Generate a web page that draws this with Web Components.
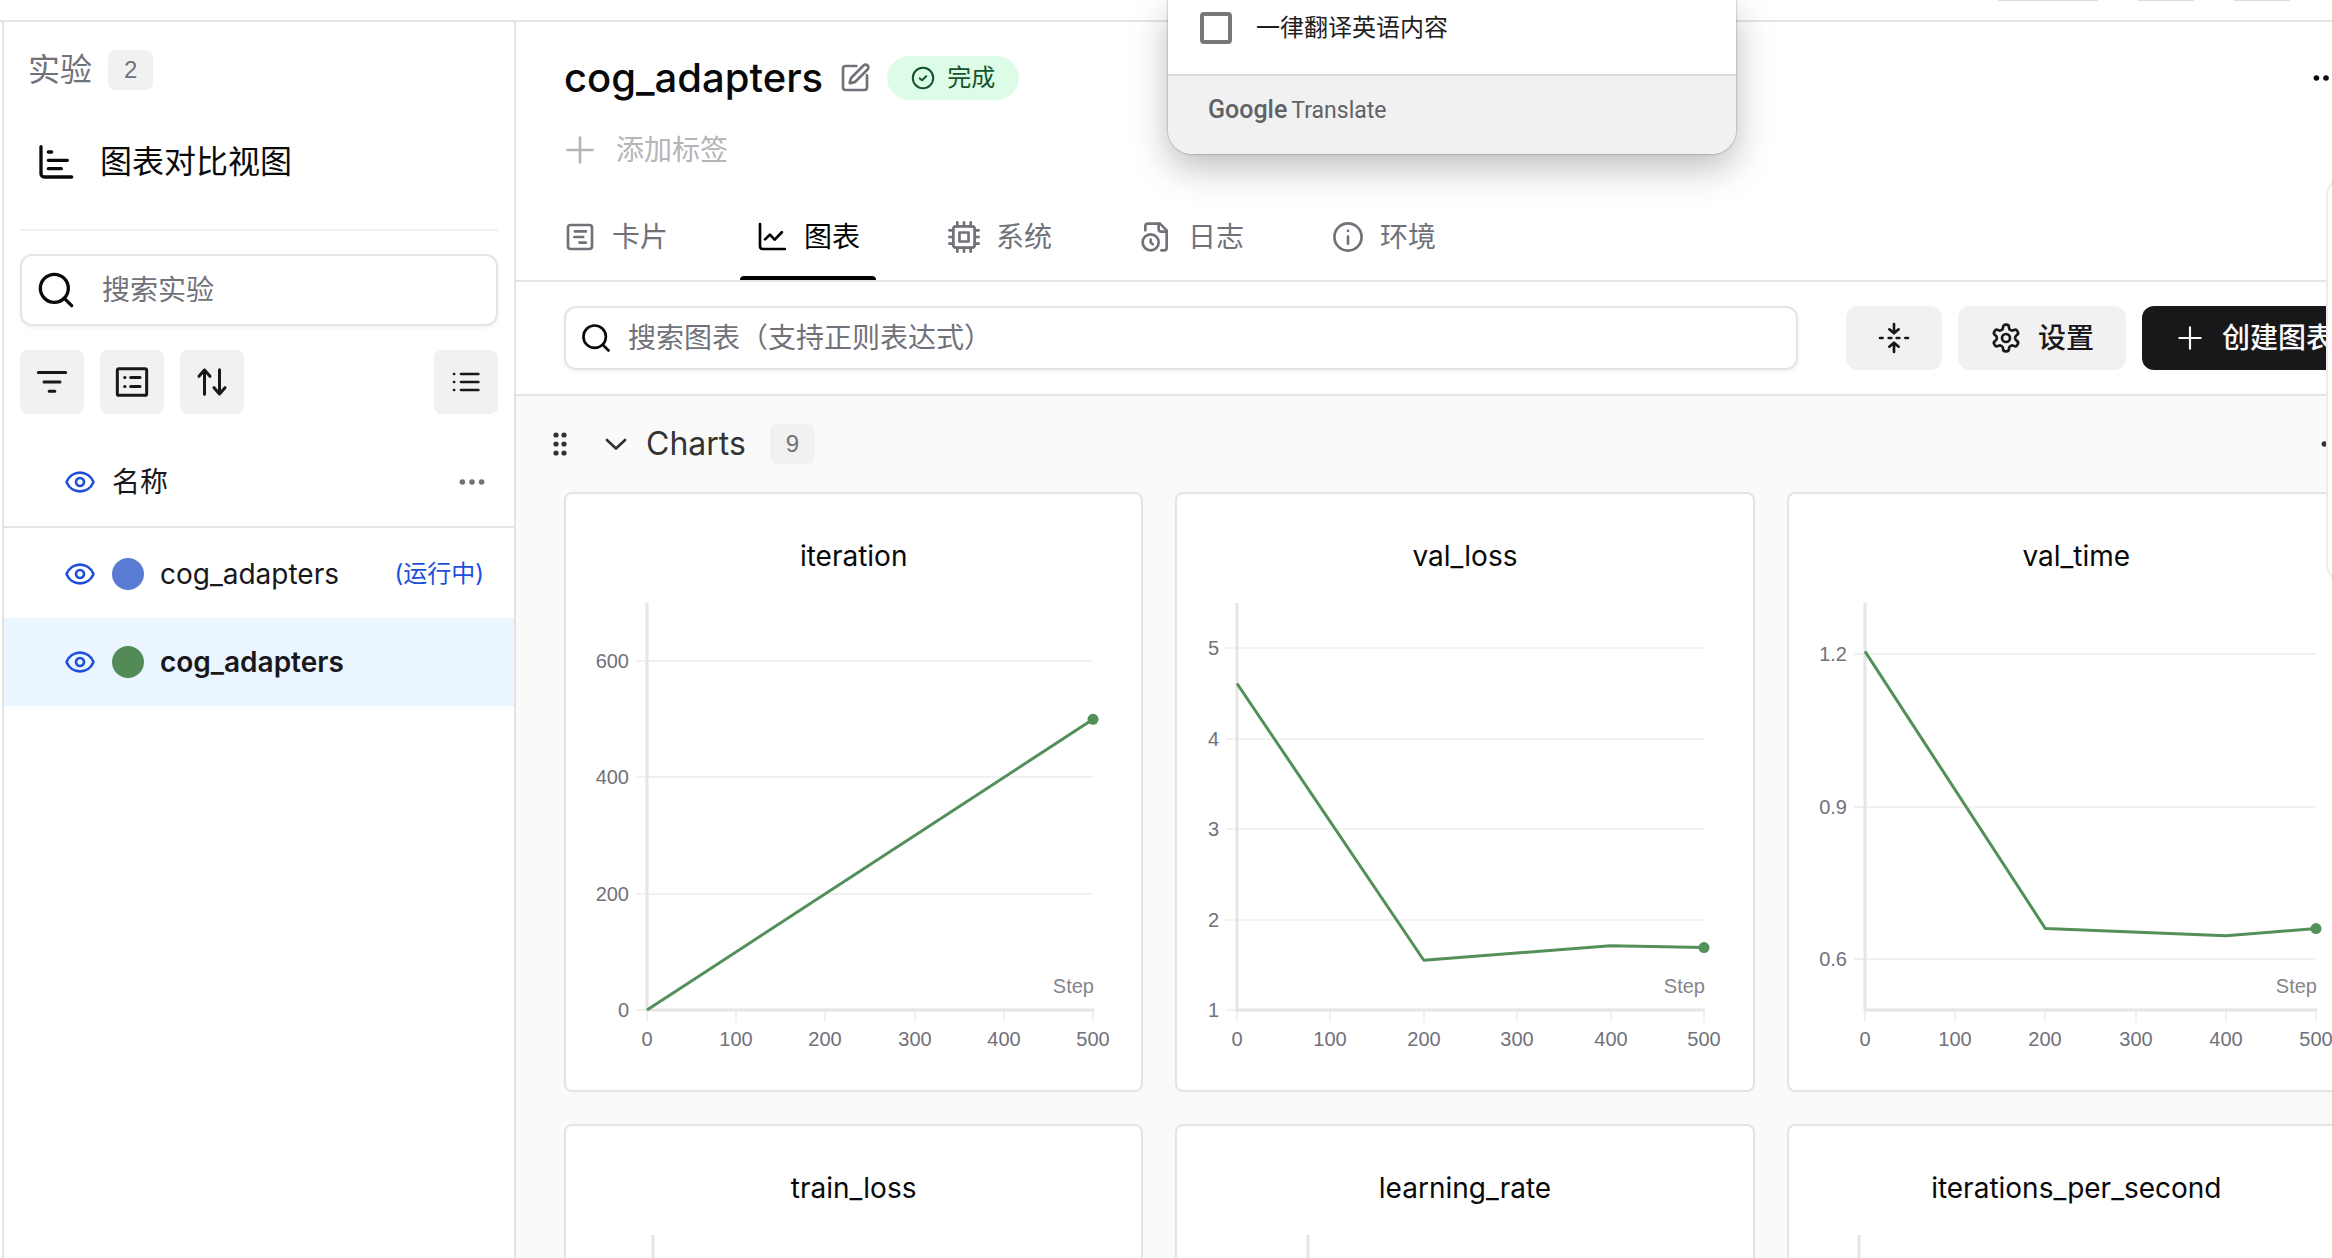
<!DOCTYPE html>
<html lang="zh-CN">
<head>
<meta charset="utf-8">
<meta name="viewport" content="width=device-width, initial-scale=1">
<title>cog_adapters</title>
<style>
    html, body { height: 100%; margin: 0; overflow: hidden; }
    body {
        background: #fff;
        color: #09090b;
        font: 28px/40px Inter, "Noto Sans CJK SC", sans-serif;
        --line: #e4e4e4;
        --soft: #f1f1f1;
        --muted: #71717a;
        --digits: "Liberation Sans", "Noto Sans CJK SC", sans-serif;
    }
</style>
</head>
<body>
<exp-app>
    <exp-sidebar slot="sidebar">
        <run-row color="#5a7bd3" state="(运行中)">cog_adapters</run-row>
        <run-row color="#528b58" selected>cog_adapters</run-row>
    </exp-sidebar>
    <run-header name="cog_adapters">
        <tab-item icon="card">卡片</tab-item>
        <tab-item icon="chart" selected>图表</tab-item>
        <tab-item icon="cpu">系统</tab-item>
        <tab-item icon="log">日志</tab-item>
        <tab-item icon="info">环境</tab-item>
    </run-header>
    <chart-toolbar></chart-toolbar>
    <chart-section name="Charts" count="9">
        <line-chart name="iteration" inset="81" min="0" max="700" ticks="0,200,400,600" points="0,0 500,500"></line-chart>
        <line-chart name="val_loss" inset="60" min="1" max="5.5" ticks="1,2,3,4,5" points="0,4.61 200,1.55 400,1.71 500,1.69"></line-chart>
        <line-chart name="val_time" inset="76" min="0.5" max="1.3" ticks="0.6,0.9,1.2" points="0,1.205 200,0.66 400,0.646 500,0.66"></line-chart>
        <line-chart name="train_loss" inset="87"></line-chart>
        <line-chart name="learning_rate" inset="131"></line-chart>
        <line-chart name="iterations_per_second" inset="70"></line-chart>
    </chart-section>
    <translate-popup slot="overlay"></translate-popup>
    <side-drawer slot="overlay"></side-drawer>
</exp-app>

<script>
// 24x24 stroke icons, the dots are zero-length round strokes or filled circles
const ICONS = {
    search: '<circle cx="11" cy="11" r="8.4"/><path d="m17 17 4.4 4.4"/>',
    compare: '<path d="M3 2.8V19a2 2 0 0 0 2 2h16.4M7.4 6h2M7.4 11h11.4M7.4 16h7.8"/>',
    filter: '<path d="M3.8 6.3h16.4M7.2 12h9.6M10.3 17.6h3.4"/>',
    columns: '<rect x="3.2" y="4" width="17.6" height="16" rx="1"/><path d="M7.6 9.3h.2M7.6 14.7h.2M11.2 9.3h5.6M11.2 14.7h5.6"/>',
    sort: '<path d="M7.5 19.4V4.8M4.2 8.6l3.3-3.8 3.3 3.8M16.5 4.6v14.6M13.2 15.4l3.3 3.8 3.3-3.8"/>',
    list: '<path d="M4.8 7.2h.1M4.8 12h.1M4.8 16.8h.1M9 7.2h10.4M9 12h10.4M9 16.8h10.4"/>',
    eye: '<path d="M2.06 12.35a1 1 0 0 1 0-.7 10.75 10.75 0 0 1 19.88 0 1 1 0 0 1 0 .7 10.75 10.75 0 0 1-19.88 0z"/><circle cx="12" cy="12" r="3"/>',
    more: '<g fill="currentColor" stroke="none"><circle cx="4.8" cy="12" r="2.1"/><circle cx="12" cy="12" r="2.1"/><circle cx="19.2" cy="12" r="2.1"/></g>',
    edit: '<path d="M13 3H5a2 2 0 0 0-2 2v14a2 2 0 0 0 2 2h14a2 2 0 0 0 2-2v-9"/><path d="M18.4 2.6a2.1 2.1 0 0 1 3 3l-9 9a2 2 0 0 1-.9.5l-2.9.9a.5.5 0 0 1-.6-.6l.9-2.9a2 2 0 0 1 .5-.9z"/>',
    check: '<circle cx="12" cy="12" r="10.2"/><path d="m8.8 12.4 2.3 1.9 4.1-4"/>',
    plus: '<path d="M12 2.6v18.8M2.6 12h18.8"/>',
    add: '<path d="M12 4v16M4 12h16"/>',
    card: '<rect x="3" y="3" width="18" height="18" rx="2"/><path d="M8.2 7.8h8.2M7.8 12h6.6M11.6 16.2h4.8"/>',
    chart: '<path d="M3 2.4V19a2 2 0 0 0 2 2h16.6M6.8 13.8l3.6-3.6 3.6 3.8 5.4-5.6"/>',
    cpu: '<rect x="4" y="4" width="16" height="16" rx="2"/><rect x="8.6" y="8.6" width="6.8" height="6.8"/><path d="M7 1v3M12 1v3M17 1v3M7 20v3M12 20v3M17 20v3M1 7h3M1 12h3M1 17h3M20 7h3M20 12h3M20 17h3"/>',
    log: '<path d="M16 22h2a2 2 0 0 0 2-2V7l-5-5H6a2 2 0 0 0-2 2v3"/><path d="M14 2v4a2 2 0 0 0 2 2h4"/><circle cx="8" cy="16" r="6"/><path d="M9.5 17.5 8 16.2V14"/>',
    info: '<circle cx="12" cy="12" r="10.2"/><path d="M12 17v-5.4M12 7.4v.1"/>',
    fold: '<path d="M12 22.5V16M12 8V1.5M3.5 12h-2M10 12H8M16 12h-2M22.5 12h-2M15.5 18.5l-3.5-3-3.5 3M15.5 5.500l-3.500 3-3.500-3"/>',
    gear: '<path d="M12.22 2h-.44a2 2 0 0 0-2 2v.18a2 2 0 0 1-1 1.73l-.43.25a2 2 0 0 1-2 0l-.15-.08a2 2 0 0 0-2.73.73l-.22.38a2 2 0 0 0 .73 2.73l.15.1a2 2 0 0 1 1 1.72v.51a2 2 0 0 1-1 1.74l-.15.09a2 2 0 0 0-.73 2.73l.22.38a2 2 0 0 0 2.73.73l.15-.08a2 2 0 0 1 2 0l.43.25a2 2 0 0 1 1 1.73V20a2 2 0 0 0 2 2h.44a2 2 0 0 0 2-2v-.18a2 2 0 0 1 1-1.73l.43-.25a2 2 0 0 1 2 0l.15.08a2 2 0 0 0 2.73-.73l.22-.39a2 2 0 0 0-.73-2.73l-.15-.08a2 2 0 0 1-1-1.74v-.5a2 2 0 0 1 1-1.74l.15-.09a2 2 0 0 0 .73-2.73l-.22-.38a2 2 0 0 0-2.73-.73l-.15.08a2 2 0 0 1-2 0l-.43-.25a2 2 0 0 1-1-1.73V4a2 2 0 0 0-2-2z"/><circle cx="12" cy="12" r="3"/>',
    drag: '<g fill="currentColor" stroke="none"><circle cx="8" cy="3" r="2.6"/><circle cx="16" cy="3" r="2.6"/><circle cx="8" cy="12" r="2.6"/><circle cx="16" cy="12" r="2.6"/><circle cx="8" cy="21" r="2.6"/><circle cx="16" cy="21" r="2.6"/></g>',
    chevron: '<path d="m5.2 9 6.8 6.4L18.8 9"/>'
};

class BaseElement extends HTMLElement {
    connectedCallback() {
        if (!this.shadowRoot) {
            this.attachShadow({ mode: 'open' }).innerHTML = this.getTemplateString();
        }
    }
    attr(name) {
        return this.getAttribute(name) || '';
    }
}

class UiIcon extends BaseElement {
    getTemplateString() {
        const size = this.attr('size') || 32;
        const weight = this.attr('weight') || 2;
        return `<style>
            :host { display: block; flex: none; width: ${size}px; height: ${size}px; }
            svg { display: block; width: 100%; height: 100%; overflow: visible; }
        </style>
        <svg viewBox="0 0 24 24" fill="none" stroke="currentColor" stroke-width="${weight}" stroke-linecap="round" stroke-linejoin="round" aria-hidden="true">${ICONS[this.attr('name')]}</svg>`;
    }
}

class CountBadge extends BaseElement {
    getTemplateString() {
        return `<style>
            :host { display: block; flex: none; padding: 0 16px; border-radius: 8px; background: var(--soft); color: var(--muted); font: 24px/40px var(--digits); }
        </style><slot></slot>`;
    }
}

// button with an optional text in its slot; wide, dark and bare change its look
class UiButton extends BaseElement {
    getTemplateString() {
        return `<style>
            :host { display: block; flex: none; }
            button { display: flex; align-items: center; justify-content: center; gap: 16px; box-sizing: border-box; min-width: 64px; height: 64px; padding: 0 12px; border: 0; border-radius: 8px; background: var(--soft); color: #18181b; font: inherit; font-weight: 500; cursor: pointer; }
            :host([wide]) button { padding: 0 32px; border-radius: 12px; }
            :host([dark]) button { background: #18181b; color: #fafafa; }
            :host([bare]) button { gap: 20px; min-width: 0; height: auto; padding: 0; background: none; color: inherit; font-weight: 400; }
        </style>
        <button type="button" aria-label="${this.attr('label')}"><ui-icon name="${this.attr('icon')}" size="${this.attr('size') || 32}" weight="${this.attr('weight') || 2}"></ui-icon><slot></slot></button>`;
    }
}

class SearchField extends BaseElement {
    getTemplateString() {
        return `<style>
            :host { display: block; flex: auto; min-width: 0; }
            label { display: flex; align-items: center; gap: 16px; box-sizing: border-box; height: 64px; padding: 0 14px; border: 2px solid var(--line); border-radius: 12px; box-shadow: 0 2px 4px rgba(0, 0, 0, .05); background: #fff; }
            :host([large]) label { height: 72px; gap: 26px; }
            input { flex: auto; min-width: 0; padding: 0; border: 0; outline: 0; background: none; color: inherit; font: inherit; }
            input::placeholder { color: var(--muted); opacity: 1; }
        </style>
        <label><ui-icon name="search" size="${this.hasAttribute('large') ? 40 : 32}"></ui-icon><input type="search" aria-label="${this.attr('hint')}" placeholder="${this.attr('hint')}"></label>`;
    }
}

class RunRow extends BaseElement {
    getTemplateString() {
        const state = this.attr('state');
        return `<style>
            :host { display: flex; align-items: center; gap: 16px; height: 88px; padding: 0 30px 0 60px; color: #18181b; }
            :host([selected]) { background: #ebf5ff; font-weight: 600; }
            .eye { color: #1d4fdb; }
            i { flex: none; width: 32px; height: 32px; border-radius: 50%; background: ${this.attr('color')}; }
            a { flex: auto; color: inherit; text-decoration: none; }
            span { color: #1d4fdb; font-size: 24px; white-space: nowrap; }
        </style>
        <ui-button class="eye" bare icon="eye" label="显示"></ui-button>
        <i></i>
        <a href="#run"><slot></slot></a>
        ${state ? `<span>${state}</span>` : ''}`;
    }
}

class ExpSidebar extends BaseElement {
    getTemplateString() {
        return `<style>
            :host { display: block; box-sizing: border-box; border: solid var(--line); border-width: 0 2px; background: #fff; }
            .top { padding: 28px 16px 24px; }
            h2 { display: flex; align-items: center; gap: 16px; margin: 0 8px; color: var(--muted); font-size: 32px; font-weight: 400; }
            .compare { display: flex; align-items: center; gap: 24px; height: 64px; margin: 40px 0 35px; padding: 0 16px; color: inherit; font-size: 32px; text-decoration: none; }
            hr { height: 2px; margin: 0 0 23px; border: 0; background: var(--soft); }
            .tools { display: flex; gap: 16px; margin-top: 24px; }
            .tools :last-child { margin-left: auto; }
            .head { display: flex; align-items: center; gap: 16px; height: 88px; padding: 0 26px 0 60px; border-bottom: 2px solid var(--line); color: #18181b; }
            .head span { flex: auto; }
            .eye { color: #1d4fdb; }
            .more { color: var(--muted); }
            .runs { padding-top: 2px; }
        </style>
        <div class="top">
            <h2>实验<count-badge>2</count-badge></h2>
            <a class="compare" href="#compare"><ui-icon name="compare" size="40"></ui-icon>图表对比视图</a>
            <hr>
            <search-field large hint="搜索实验"></search-field>
            <div class="tools">
                <ui-button icon="filter" size="40" weight="1.8" label="筛选"></ui-button>
                <ui-button icon="columns" size="40" weight="1.8" label="列"></ui-button>
                <ui-button icon="sort" size="40" weight="1.8" label="排序"></ui-button>
                <ui-button icon="list" size="40" weight="1.6" label="列表"></ui-button>
            </div>
        </div>
        <div class="head">
            <ui-button class="eye" bare icon="eye" label="全部显示"></ui-button>
            <span>名称</span>
            <ui-button class="more" bare icon="more" label="更多"></ui-button>
        </div>
        <div class="runs"><slot></slot></div>`;
    }
}

class TabItem extends BaseElement {
    getTemplateString() {
        return `<style>
            :host { display: block; color: var(--muted); }
            :host([selected]) { color: #000; }
            button { position: relative; display: flex; align-items: center; gap: 16px; height: 86px; padding: 0 16px; border: 0; background: none; color: inherit; font: inherit; cursor: pointer; }
            :host([selected]) button::after { content: ""; position: absolute; left: 0; right: 0; bottom: 0; height: 4px; border-radius: 4px 4px 0 0; background: #000; }
        </style>
        <button type="button" role="tab"><ui-icon name="${this.attr('icon')}"></ui-icon><slot></slot></button>`;
    }
}

class RunHeader extends BaseElement {
    getTemplateString() {
        return `<style>
            :host { display: block; padding: 32px 32px 0 48px; border-bottom: 2px solid var(--line); background: #fff; }
            .title { display: flex; align-items: center; gap: 16px; height: 48px; }
            h1 { margin: 0; font-size: 40px; line-height: 48px; font-weight: 500; }
            .edit { color: var(--muted); }
            .state { display: flex; align-items: center; gap: 12px; height: 44px; padding: 0 24px; border-radius: 22px; background: #dcfce7; color: #14532d; font-size: 24px; }
            .more { margin-left: auto; padding: 0 24px; }
            .tag { display: flex; height: 48px; margin-top: 24px; color: #b4b4b9; }
            .tag ui-button { align-self: center; }
            nav { display: flex; gap: 56px; margin: 20px 0 0 -16px; }
        </style>
        <div class="title">
            <h1>${this.attr('name')}</h1>
            <ui-button class="edit" bare icon="edit" label="编辑"></ui-button>
            <span class="state"><ui-icon name="check" size="24"></ui-icon>完成</span>
            <ui-button class="more" bare icon="more" label="更多"></ui-button>
        </div>
        <div class="tag"><ui-button bare icon="plus" label="添加标签">添加标签</ui-button></div>
        <nav role="tablist"><slot></slot></nav>`;
    }
}

class ChartToolbar extends BaseElement {
    getTemplateString() {
        return `<style>
            :host { display: flex; gap: 16px; padding: 24px 32px 24px 48px; border-bottom: 2px solid var(--line); background: #fff; }
            search-field { margin-right: 32px; }
        </style>
        <search-field hint="搜索图表（支持正则表达式）"></search-field>
        <ui-button wide icon="fold" label="折叠"></ui-button>
        <ui-button wide icon="gear" label="设置">设置</ui-button>
        <ui-button wide dark icon="add" weight="1.6" label="创建图表">创建图表</ui-button>`;
    }
}

class ChartSection extends BaseElement {
    getTemplateString() {
        return `<style>
            :host { display: block; flex: auto; padding: 0 32px 0 48px; background: #fafafa; }
            header { display: flex; align-items: center; height: 96px; margin-left: -16px; color: #333; }
            h2 { margin: 0 24px 0 14px; font-size: 32px; font-weight: 400; }
            .fold { margin-left: 28px; }
            .more { margin-left: auto; padding: 0 16px; }
            .grid { display: grid; grid-template-columns: repeat(3, minmax(0, 1fr)); gap: 32px; }
        </style>
        <header>
            <ui-icon name="drag" size="24"></ui-icon>
            <ui-button class="fold" bare icon="chevron" label="折叠"></ui-button>
            <h2>${this.attr('name')}</h2>
            <count-badge>${this.attr('count')}</count-badge>
            <ui-button class="more" bare icon="more" label="更多"></ui-button>
        </header>
        <div class="grid"><slot></slot></div>`;
    }
}

class LineChart extends BaseElement {
    connectedCallback() {
        super.connectedCallback();
        this.draw();
        new ResizeObserver(() => this.draw()).observe(this);
    }
    getTemplateString() {
        return `<style>
            :host { display: block; box-sizing: border-box; height: 600px; border: 2px solid var(--line); border-radius: 8px; background: #fff; overflow: hidden; }
            h3 { margin: 42px 0 6px; font-size: 28px; font-weight: 400; text-align: center; }
            svg { display: block; width: 100%; height: 508px; }
            text { fill: var(--muted); font: 20px var(--digits); }
            .grid { stroke: #f1f1f1; stroke-width: 2; }
            .axis { fill: none; stroke: #e5e5e5; stroke-width: 3; }
            .line { fill: none; stroke: #528f59; stroke-width: 3; stroke-linejoin: bevel; }
            .step { fill: #85858c; }
        </style>
        <h3>${this.attr('name')}</h3>
        <svg></svg>`;
    }
    draw() {
        const svg = this.shadowRoot.querySelector('svg');
        const left = Number(this.attr('inset'));
        const right = svg.clientWidth - 48;
        const top = 21, bottom = 428;
        let out = '';
        if (this.hasAttribute('points')) {
            const min = Number(this.attr('min')), max = Number(this.attr('max'));
            const x = v => left + (right - left) * v / 500;
            const y = v => bottom - (bottom - top) * (v - min) / (max - min);
            for (const t of this.attr('ticks').split(',')) {
                const ty = Math.round(y(Number(t)));
                out += `<path class="grid" d="M${left - 11} ${ty}H${right}"/><text x="${left - 18}" y="${ty + 7}" text-anchor="end">${t}</text>`;
            }
            for (let t = 0; t <= 500; t += 100) {
                const tx = Math.round(x(t));
                out += `<path class="grid" d="M${tx} ${bottom}v12"/><text x="${tx}" y="${bottom + 36}" text-anchor="middle">${t}</text>`;
            }
            const points = this.attr('points').split(' ').map(p => p.split(',').map(Number)).map(p => [x(p[0]), y(p[1])]);
            const end = points[points.length - 1];
            out += `<path class="axis" d="M${left} ${top}V${bottom}H${right + 1}"/>
                <text class="step" x="${right + 1}" y="${bottom - 17}" text-anchor="end">Step</text>
                <polyline class="line" points="${points.join(' ')}"/>
                <circle cx="${end[0]}" cy="${end[1]}" r="5.5" fill="#528f59"/>`;
        } else {
            out = `<path class="axis" d="M${left} ${top}V${bottom}H${right}"/>`;
        }
        svg.innerHTML = out;
    }
}

class TranslatePopup extends BaseElement {
    getTemplateString() {
        return `<style>
            :host { position: absolute; top: 0; left: calc(50% + 2px); width: 568px; border-radius: 0 0 24px 24px; background: #fff; box-shadow: 0 0 2px rgba(0, 0, 0, .5), 0 14px 36px rgba(0, 0, 0, .26); overflow: hidden; }
            label { display: flex; align-items: center; gap: 24px; height: 56px; padding: 0 32px 18px; color: #1f1f1f; font-size: 24px; }
            input { appearance: none; box-sizing: border-box; width: 32px; height: 32px; margin: 0; border: 4px solid #777; border-radius: 4px; background: #fff; }
            footer { display: flex; align-items: baseline; gap: 4px; height: 60px; padding: 18px 40px 0; border-top: 2px solid #dadce0; background: #f1f1f1; color: #5f6368; font: 23px/32px Roboto, sans-serif; }
            b { font-size: 25px; font-weight: 500; }
        </style>
        <label><input type="checkbox">一律翻译英语内容</label>
        <footer><b>Google</b><span>Translate</span></footer>`;
    }
}

// closed panel, only its edge shows at the right of the window
class SideDrawer extends BaseElement {
    getTemplateString() {
        return `<style>
            :host { position: absolute; top: 176px; right: -34px; box-sizing: border-box; width: 40px; height: 408px; border: 2px solid #ececec; border-radius: 20px; background: #fff; }
        </style>`;
    }
}

class ExpApp extends BaseElement {
    getTemplateString() {
        return `<style>
            :host { position: relative; display: block; height: 100vh; overflow: hidden; }
            .page { display: grid; grid-template: 22px minmax(0, 1fr) / 516px minmax(0, 1fr); width: calc(100% + 66px); height: 100%; }
            .bar { grid-column: 1 / -1; display: flex; justify-content: flex-end; gap: 40px; box-sizing: border-box; padding-right: 108px; border-bottom: 2px solid var(--line); }
            .bar i { width: 56px; height: 1px; background: #dcdcdc; }
            .bar i:first-child { width: 100px; }
            .side { display: flex; padding-left: 2px; }
            .side ::slotted(*) { flex: 1; min-width: 0; }
            main { display: flex; flex-direction: column; overflow: hidden; }
        </style>
        <div class="page">
            <div class="bar"><i></i><i></i><i></i></div>
            <div class="side"><slot name="sidebar"></slot></div>
            <main><slot></slot></main>
        </div>
        <slot name="overlay"></slot>`;
    }
}

customElements.define('ui-icon', UiIcon);
customElements.define('count-badge', CountBadge);
customElements.define('ui-button', UiButton);
customElements.define('search-field', SearchField);
customElements.define('run-row', RunRow);
customElements.define('exp-sidebar', ExpSidebar);
customElements.define('tab-item', TabItem);
customElements.define('run-header', RunHeader);
customElements.define('chart-toolbar', ChartToolbar);
customElements.define('chart-section', ChartSection);
customElements.define('translate-popup', TranslatePopup);
customElements.define('side-drawer', SideDrawer);
customElements.define('exp-app', ExpApp);
customElements.define('line-chart', LineChart);
</script>
</body>
</html>
